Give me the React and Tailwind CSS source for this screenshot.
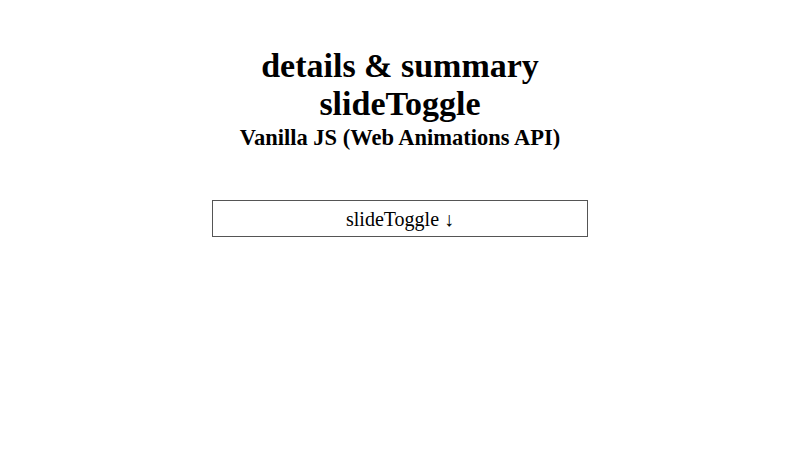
export default function App() {
  return (
    <div className="min-h-[450px] w-full bg-white text-black" style={{ fontFamily: '"Liberation Serif", serif' }}>
      <div className="flex flex-col items-center pt-[47px]">
        <h1 className="text-center text-[34px] font-bold leading-[38px]">
          details &amp; summary
          <br />
          slideToggle
        </h1>
        <h2 className="text-center text-[22.5px] font-bold leading-[30px]">Vanilla JS (Web Animations API)</h2>
        <div className="mt-[47px] flex h-[37px] w-[376px] items-center justify-center border border-[#555] text-[20px]">
          slideToggle ↓
        </div>
      </div>
    </div>
  );
}
